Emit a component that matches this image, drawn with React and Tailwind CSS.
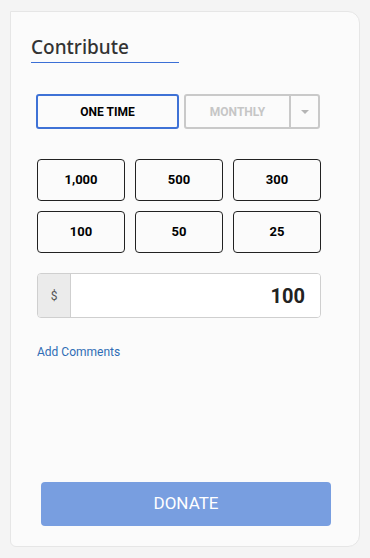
import { useState } from 'react'

const amounts = ['1,000', '500', '300', '100', '50', '25']

export default function App() {
  const [amount, setAmount] = useState('100')

  return (
    <div className="w-[370px] h-[558px] bg-[#f4f4f4] pt-[11px] pl-[10px] font-['Roboto',sans-serif]">
      <div className="w-[350px] h-[536px] bg-[#fbfbfb] border border-[#e6e6e6] rounded-tr-xl rounded-br-xl rounded-bl-md flex flex-col">
        <div className="pl-[20px] pt-[22px]">
          <h1 className="font-['Noto_Sans',sans-serif] text-[19px] font-medium text-[#333] leading-[26px] w-[148px] pb-[2px] border-b border-[#3b6fd6]">
            Contribute
          </h1>
        </div>

        <div className="flex pl-[25px] mt-[31px] gap-[5px]">
          <button className="w-[143px] h-[35px] border-2 border-[#3f72d6] rounded-[3px] text-[12px] font-bold text-black">
            ONE TIME
          </button>
          <div className="flex w-[136px] h-[35px] border-2 border-[#c9c9c9] rounded-[3px]">
            <button className="flex-1 text-[12px] font-bold text-[#c6c6c6]">MONTHLY</button>
            <div className="w-[29px] border-l-2 border-[#c9c9c9] flex items-center justify-center">
              <span className="w-0 h-0 border-l-[4px] border-r-[4px] border-t-[4px] border-l-transparent border-r-transparent border-t-[#b5b5b5]"></span>
            </div>
          </div>
        </div>

        <div className="grid grid-cols-3 gap-x-[10px] gap-y-[10px] pl-[26px] pr-[38px] mt-[30px]">
          {amounts.map((a) => (
            <button
              key={a}
              onClick={() => setAmount(a)}
              className="h-[42px] border border-[#222] rounded-[4px] bg-[#fbfbfb] text-[13px] font-bold text-black"
            >
              {a}
            </button>
          ))}
        </div>

        <div className="flex ml-[26px] mr-[38px] mt-[20px] h-[45px] border border-[#cfcfcf] rounded-[4px] overflow-hidden">
          <div className="w-[33px] bg-[#ebebeb] border-r border-[#cfcfcf] flex items-center justify-center text-[12px] text-[#555]">
            $
          </div>
          <input
            value={amount}
            onChange={(e) => setAmount(e.target.value)}
            className="flex-1 min-w-0 bg-white text-right pr-[15px] text-[20px] font-bold text-[#222] outline-none"
          />
        </div>

        <a href="#" className="ml-[26px] mt-[25px] text-[12px] text-[#2f6db5] w-fit">
          Add Comments
        </a>

        <button className="mt-auto mb-[20px] ml-[30px] w-[290px] h-[44px] bg-[#789ee0] rounded-[4px] text-white text-[17px]">
          DONATE
        </button>
      </div>
    </div>
  )
}
